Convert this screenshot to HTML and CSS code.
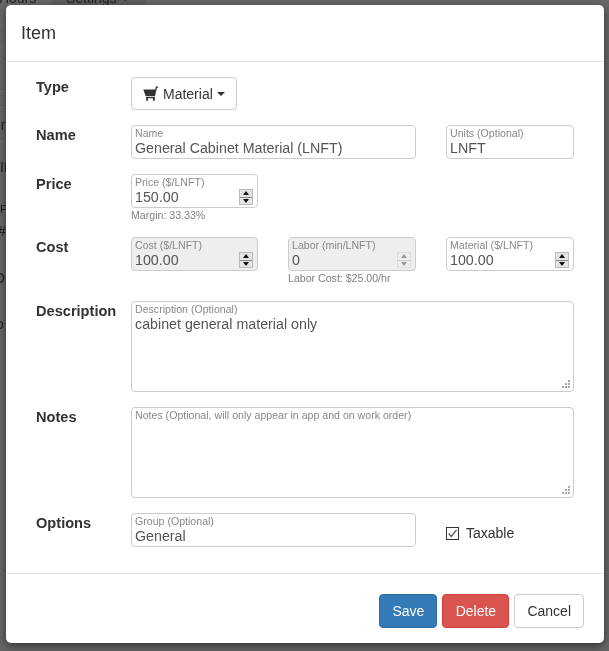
FILE: index.html
```html
<!DOCTYPE html>
<html lang="en">
  <head>
    <meta charset="UTF-8" />
    <meta name="viewport" content="width=device-width, initial-scale=1.0" />
    <title>Item</title>
    <link rel="stylesheet" href="styles.css">
  </head>
  <body>
    <div class="backdrop">
      <span class="bg-text bg-hours">Hours</span>
      <span class="bg-tab">Settings <i class="caret"></i></span>
      <span class="bg-line line-e"></span>
      <span class="bg-line line-a"></span>
      <span class="bg-line line-b"></span>
      <span class="bg-line line-c"></span>
      <span class="bg-line line-d"></span>
      <span class="bg-text bg-1">er</span>
      <span class="bg-text bg-2">IF</span>
      <span class="bg-text bg-3">F</span>
      <span class="bg-text bg-4">#</span>
      <span class="bg-text bg-5">O</span>
      <span class="bg-text bg-6">o</span>
    </div>

    <div class="modal">
      <div class="modal-header">Item</div>
      <form class="modal-body">
        <div class="row row-type">
          <div class="row-label">Type</div>
          <button type="button" class="btn btn-default btn-type">
            <svg class="cart" viewBox="0 0 15 15" width="15" height="15">
              <path d="M0.3 3.4 H12.2 L12.9 0.4 H15 V1.8 H14 L12 10 H2.6 Z"/>
              <path d="M2.8 10.8 H12 V12 H11.8 V14.8 H10 V12.2 H5 V14.8 H3.2 V12 H2.8 Z"/>
            </svg>
            Material <i class="caret"></i>
          </button>
        </div>

        <div class="row">
          <div class="row-label">Name</div>
          <div class="fields">
            <label class="field wide">
              <span class="field-label">Name</span>
              <input type="text" value="General Cabinet Material (LNFT)" />
            </label>
            <label class="field">
              <span class="field-label">Units (Optional)</span>
              <input type="text" value="LNFT" />
            </label>
          </div>
        </div>

        <div class="row">
          <div class="row-label">Price</div>
          <div class="fields">
            <div class="col">
              <label class="field">
                <span class="field-label">Price ($/LNFT)</span>
                <input type="text" value="150.00" />
                <span class="spinner"><i class="up"></i><i class="down"></i></span>
              </label>
              <p class="help">Margin: 33.33%</p>
            </div>
          </div>
        </div>

        <div class="row row-cost">
          <div class="row-label">Cost</div>
          <div class="fields">
            <div class="col">
              <label class="field disabled">
                <span class="field-label">Cost ($/LNFT)</span>
                <input type="text" value="100.00" disabled />
                <span class="spinner"><i class="up"></i><i class="down"></i></span>
              </label>
            </div>
            <div class="col">
              <label class="field disabled">
                <span class="field-label">Labor (min/LNFT)</span>
                <input type="text" value="0" disabled />
                <span class="spinner faint"><i class="up"></i><i class="down"></i></span>
              </label>
              <p class="help">Labor Cost: $25.00/hr</p>
            </div>
            <div class="col">
              <label class="field">
                <span class="field-label">Material ($/LNFT)</span>
                <input type="text" value="100.00" />
                <span class="spinner"><i class="up"></i><i class="down"></i></span>
              </label>
            </div>
          </div>
        </div>

        <div class="row">
          <div class="row-label">Description</div>
          <label class="field area">
            <span class="field-label">Description (Optional)</span>
            <textarea>cabinet general material only</textarea>
            <svg class="grip" viewBox="0 0 9 9" width="9" height="9">
              <path d="M6 0h2v2H6zM3 3h2v2H3zM6 3h2v2H6zM0 6h2v2H0zM3 6h2v2H3zM6 6h2v2H6z"/>
            </svg>
          </label>
        </div>

        <div class="row">
          <div class="row-label">Notes</div>
          <label class="field area">
            <span class="field-label">Notes (Optional, will only appear in app and on work order)</span>
            <textarea></textarea>
            <svg class="grip" viewBox="0 0 9 9" width="9" height="9">
              <path d="M6 0h2v2H6zM3 3h2v2H3zM6 3h2v2H6zM0 6h2v2H0zM3 6h2v2H3zM6 6h2v2H6z"/>
            </svg>
          </label>
        </div>

        <div class="row">
          <div class="row-label">Options</div>
          <div class="fields">
            <label class="field wide">
              <span class="field-label">Group (Optional)</span>
              <input type="text" value="General" />
            </label>
            <label class="check">
              <svg class="checkbox" viewBox="0 0 13 13" width="13" height="13">
                <rect x="0.5" y="0.5" width="12" height="12" fill="#fff" stroke="#333"/>
                <path d="M2.6 6.4 L5.2 9.4 L10.6 2.8" fill="none" stroke="#555" stroke-width="1.3"/>
              </svg>
              Taxable
            </label>
          </div>
        </div>
      </form>
      <div class="modal-footer">
        <button type="button" class="btn btn-primary">Save</button>
        <button type="button" class="btn btn-danger">Delete</button>
        <button type="button" class="btn btn-default">Cancel</button>
      </div>
    </div>
  </body>
</html>
```

FILE: styles.css
```css
* {
  box-sizing: border-box;
}
html,
body {
  height: 100%;
}
body {
  margin: 0;
  background-color: #666;
  font-family: "Liberation Sans", Arial, sans-serif;
  font-size: 14px;
  color: #333;
  overflow: hidden;
}

/* page dimmed behind the dialog */
.backdrop {
  position: fixed;
  inset: 0;
  overflow: hidden;
  color: #222;
}
.bg-text {
  position: absolute;
  font-size: 14px;
  line-height: 20px;
}
.bg-hours {
  top: -12px;
  left: -1px;
}
.bg-tab {
  position: absolute;
  top: -12px;
  left: 52px;
  width: 94px;
  height: 17px;
  padding: 0 14px;
  line-height: 20px;
  background-color: #5c5c5c;
}
.bg-line {
  position: absolute;
  left: 0;
  width: 6px;
  height: 1px;
  background-color: #777;
}
.line-e { top: 25px; }
.line-a { top: 46px; }
.line-b { top: 91px; }
.line-c { top: 107px; }
.line-d { top: 141px; }
.bg-1 { top: 115px; left: -7px; }
.bg-2 { top: 157px; left: 0; }
.bg-3 { top: 199px; left: 0; font-size: 11px; }
.bg-4 { top: 221px; left: -2px; }
.bg-5 { top: 268px; left: -6px; }
.bg-6 { top: 314px; left: -4px; }

/* dialog */
.modal {
  position: absolute;
  top: 5px;
  left: 6px;
  width: 598px;
  height: 638px;
  background-color: white;
  border-radius: 5px;
  box-shadow: 0 3px 9px rgba(0, 0, 0, 0.5);
}
.modal-header {
  height: 57px;
  padding: 15px;
  font-size: 18px;
  line-height: 26px;
  border-bottom: 1px solid #e5e5e5;
}
.modal-body {
  height: 511px;
  padding: 15px 30px 0 30px;
  display: flex;
  flex-direction: column;
  gap: 15px;
}
.modal-footer {
  display: flex;
  justify-content: flex-end;
  gap: 5px;
  padding: 20px 20px 15px 15px;
  border-top: 1px solid #e5e5e5;
}

.row {
  display: flex;
}
.row-type {
  height: 33px;
}
.row-cost {
  height: 49px;
}
.row-label {
  width: 95px;
  font-size: 14.6px;
  font-weight: bold;
  line-height: 20px;
  flex-shrink: 0;
}
.fields {
  display: flex;
  gap: 30px;
}

.btn {
  height: 34px;
  padding: 6px 12px;
  font-family: inherit;
  font-size: 14px;
  line-height: 20px;
  border: 1px solid transparent;
  border-radius: 4px;
  cursor: pointer;
}
.btn-default {
  color: #333;
  background-color: #fff;
  border-color: #ccc;
}
.btn-primary {
  color: #fff;
  background-color: #337ab7;
  border-color: #2e6da4;
}
.btn-danger {
  width: 67px;
  color: #fff;
  background-color: #d9534f;
  border-color: #d43f3a;
}
.btn-type {
  display: flex;
  align-items: center;
  gap: 5px;
  width: 106px;
  height: 33px;
  padding: 0 11px;
}
.cart {
  fill: #333;
  flex-shrink: 0;
}
.caret {
  display: inline-block;
  width: 0;
  height: 0;
  margin-left: 1px;
  vertical-align: middle;
  border-top: 4px solid;
  border-right: 4px solid transparent;
  border-left: 4px solid transparent;
}
.btn-type .caret {
  margin-left: -1px;
}

/* input with small label inside the box */
.field {
  position: relative;
  display: block;
  width: 128px;
  height: 34px;
  padding: 2px 3px 0 3px;
  background-color: #fff;
  border: 1px solid #ccc;
  border-radius: 4px;
}
.col:first-child .field {
  width: 127px;
}
.fields > .field.wide {
  width: 285px;
}
.field.area {
  width: 443px;
  height: 91px;
}
.field.disabled {
  background-color: #eee;
}
.field-label {
  display: block;
  height: 11px;
  font-size: 10.6px;
  line-height: 11px;
  color: #888;
}
.field input,
.field textarea {
  display: block;
  width: 100%;
  padding: 0;
  border: 0;
  outline: 0;
  background: transparent;
  font-family: inherit;
  font-size: 14.25px;
  line-height: 18px;
  color: #555;
  resize: none;
}
.field input {
  height: 18px;
}
.field textarea {
  height: 74px;
}
.field input:disabled {
  color: #555;
  -webkit-text-fill-color: #555;
  opacity: 1;
}
.help {
  margin: 0;
  height: 14px;
  padding-top: 1px;
  font-size: 10.6px;
  line-height: 13px;
  color: #808080;
}

.spinner {
  position: absolute;
  top: 14px;
  right: 4px;
  width: 14px;
  height: 16px;
  display: flex;
  flex-direction: column;
  gap: 1px;
  background-color: #888;
  border: 1px solid #bbb;
}
.spinner i {
  flex: 1;
  display: flex;
  align-items: center;
  justify-content: center;
  background-color: #e4e4e4;
}
.spinner i::after {
  content: "";
  border-right: 3px solid transparent;
  border-left: 3px solid transparent;
}
.spinner .up::after {
  border-bottom: 4px solid #111;
}
.spinner .down::after {
  border-top: 4px solid #111;
}
.spinner.faint {
  background-color: #ccc;
  border-color: #ddd;
}
.spinner.faint i {
  background-color: #eee;
}
.spinner.faint .up::after {
  border-bottom-color: #999;
}
.spinner.faint .down::after {
  border-top-color: #999;
}

.grip {
  position: absolute;
  right: 2px;
  bottom: 2px;
  fill: #aaa;
}

.check {
  display: flex;
  align-items: center;
  gap: 7px;
  height: 34px;
  margin-top: 3px;
  line-height: 20px;
}
```
